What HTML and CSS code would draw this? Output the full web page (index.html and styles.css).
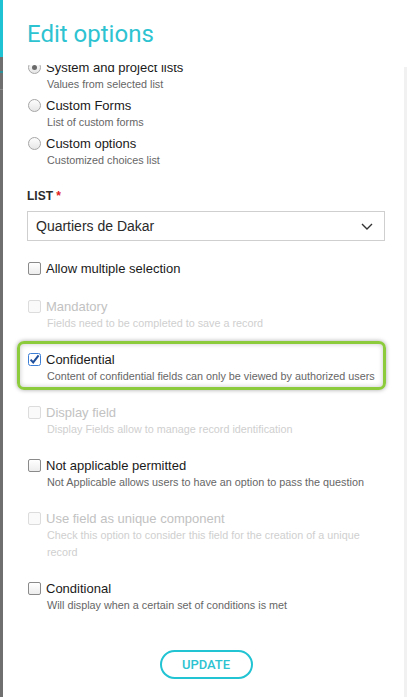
FILE: index.html
```html
<!DOCTYPE html>
<html lang="en">
<head>
<meta charset="utf-8">
<title>Edit options</title>
<link rel="stylesheet" href="styles.css">
</head>
<body>
<div class="page">
  <div class="edge"></div>
  <div class="panel">
    <header class="panel-header">
      <h1 class="title">Edit options</h1>
    </header>
    <div class="scroll">
      <div class="scroll-content">
        <div class="radios">
          <div class="opt">
            <div class="opt-line"><span class="radio radio-checked"></span><span class="opt-label">System and project lists</span></div>
            <div class="opt-sub">Values from selected list</div>
          </div>
          <div class="opt">
            <div class="opt-line"><span class="radio"></span><span class="opt-label">Custom Forms</span></div>
            <div class="opt-sub">List of custom forms</div>
          </div>
          <div class="opt">
            <div class="opt-line"><span class="radio"></span><span class="opt-label">Custom options</span></div>
            <div class="opt-sub">Customized choices list</div>
          </div>
        </div>

        <div class="field-label">LIST <span class="req">*</span></div>
        <div class="select">
          <span class="select-text">Quartiers de Dakar</span>
          <svg class="chevron" width="12" height="7" viewBox="0 0 12 7"><polyline points="1,1 6,6 11,1" fill="none" stroke="#333" stroke-width="1.4"/></svg>
        </div>

        <div class="checks">
          <div class="opt opt-single">
            <div class="opt-line"><span class="box"></span><span class="opt-label">Allow multiple selection</span></div>
          </div>
          <div class="opt opt-disabled">
            <div class="opt-line"><span class="box"></span><span class="opt-label">Mandatory</span></div>
            <div class="opt-sub">Fields need to be completed to save a record</div>
          </div>
          <div class="opt opt-highlight">
            <div class="opt-line">
              <svg class="box-svg" width="13" height="13" viewBox="0 0 13 13"><rect x="0.5" y="0.5" width="12" height="12" rx="2" fill="#fff" stroke="#3d7fd6"/><polyline points="2.6,6.6 5.2,9.4 10.6,2.4" fill="none" stroke="#1f4f9a" stroke-width="2"/></svg>
              <span class="opt-label">Confidential</span>
            </div>
            <div class="opt-sub">Content of confidential fields can only be viewed by authorized users</div>
            <div class="highlight"></div>
          </div>
          <div class="opt opt-disabled">
            <div class="opt-line"><span class="box"></span><span class="opt-label">Display field</span></div>
            <div class="opt-sub">Display Fields allow to manage record identification</div>
          </div>
          <div class="opt">
            <div class="opt-line"><span class="box"></span><span class="opt-label">Not applicable permitted</span></div>
            <div class="opt-sub">Not Applicable allows users to have an option to pass the question</div>
          </div>
          <div class="opt opt-disabled">
            <div class="opt-line"><span class="box"></span><span class="opt-label">Use field as unique component</span></div>
            <div class="opt-sub">Check this option to consider this field for the creation of a unique record</div>
          </div>
          <div class="opt">
            <div class="opt-line"><span class="box"></span><span class="opt-label">Conditional</span></div>
            <div class="opt-sub">Will display when a certain set of conditions is met</div>
          </div>
        </div>

        <div class="actions">
          <button class="btn-update" type="button">UPDATE</button>
        </div>
      </div>
      <div class="track"></div>
    </div>
  </div>
</div>
</body>
</html>
```

FILE: styles.css
```css
html, body {
  margin: 0;
  padding: 0;
  height: 100%;
  background: #fff;
}

body {
  font-family: "Liberation Sans", Arial, sans-serif;
  color: #222;
}

.page {
  display: flex;
  height: 697px;
  overflow: hidden;
}

.edge {
  width: 3px;
  flex: 0 0 3px;
  background:
    linear-gradient(to bottom,
      #1ec2d2 0, #1ec2d2 57px,
      #6f6f6f 57px, #6f6f6f 71px,
      #2f8f99 71px, #2f8f99 73px,
      #6f6f6f 73px, #6f6f6f 89px,
      #8a8a8a 89px, #8a8a8a 90px,
      #6f6f6f 90px, #6f6f6f 100%);
}

.panel {
  flex: 1;
  display: flex;
  flex-direction: column;
  min-width: 0;
}

.panel-header {
  height: 65px;
  box-sizing: border-box;
  padding: 20px 0 0 24px;
  flex: 0 0 65px;
}

.title {
  margin: 0;
  font-family: Roboto, "Liberation Sans", sans-serif;
  font-weight: 400;
  font-size: 24px;
  line-height: 28px;
  color: #2ec3d1;
}

.scroll {
  flex: 1;
  display: flex;
  min-height: 0;
}

.scroll-content {
  flex: 1;
  overflow: hidden;
  padding: 0 19px 0 24px;
}

.track {
  width: 3px;
  flex: 0 0 3px;
  margin-top: 2px;
  background: #f1f1f1;
}

.radios {
  margin-top: -6px;
  display: flex;
  flex-direction: column;
  gap: 4px;
}

.opt {
  position: relative;
}

.opt-line {
  display: flex;
  align-items: center;
  height: 17px;
  padding-left: 1px;
}

.opt-label {
  font-size: 13px;
  line-height: 17px;
  color: #1a1a1a;
  margin-left: 5px;
}

.opt-sub {
  font-size: 10.8px;
  line-height: 17px;
  color: #666;
  padding-left: 20px;
}

.radio {
  width: 13px;
  height: 13px;
  box-sizing: border-box;
  border-radius: 50%;
  border: 1px solid #a6a6a6;
  background: linear-gradient(to bottom, #fdfdfd, #e6e6e6);
  flex: 0 0 13px;
  display: flex;
  align-items: center;
  justify-content: center;
}

.radio-checked::after {
  content: "";
  width: 5px;
  height: 5px;
  border-radius: 50%;
  background: #6a6a6a;
}

.box {
  width: 13px;
  height: 13px;
  box-sizing: border-box;
  border-radius: 2px;
  border: 1px solid #8a8a8a;
  background: linear-gradient(to bottom, #fff, #ededed);
  flex: 0 0 13px;
}

.box-svg {
  flex: 0 0 13px;
  display: block;
}

.field-label {
  margin-top: 19px;
  font-size: 12px;
  line-height: 16px;
  font-weight: 700;
  color: #2b2b2b;
  margin-bottom: 7px;
}

.req {
  color: #e0201b;
}

.select {
  height: 30px;
  box-sizing: border-box;
  border: 1px solid #cfcfcf;
  display: flex;
  align-items: center;
  justify-content: space-between;
  padding: 0 11px 0 8px;
}

.select-text {
  font-size: 14px;
  color: #2a2a2a;
}

.chevron {
  display: block;
}

.checks {
  margin-top: 19px;
  display: flex;
  flex-direction: column;
  gap: 19px;
}

.opt-single {
  margin-bottom: 2px;
}

.opt-disabled .opt-label {
  color: #c2c2c2;
}

.opt-disabled .opt-sub {
  color: #cfcfcf;
}

.opt-disabled .box {
  border-color: #dcdcdc;
  background: #fafafa;
}

.highlight {
  position: absolute;
  top: -10px;
  bottom: -5px;
  left: -10px;
  right: -1px;
  border: 3px solid #8ccb3c;
  border-radius: 7px;
  box-shadow: 0 0 4px rgba(0, 0, 0, 0.35), inset 0 0 5px rgba(0, 0, 0, 0.22);
  pointer-events: none;
}

.actions {
  margin-top: 36px;
  display: flex;
  justify-content: center;
}

.btn-update {
  width: 93px;
  height: 29px;
  box-sizing: border-box;
  border: 2px solid #22c3d3;
  border-radius: 15px;
  background: #fff;
  color: #2ec3d1;
  font-family: Roboto, "Liberation Sans", sans-serif;
  font-weight: 500;
  font-size: 13px;
  padding: 0;
}
```
